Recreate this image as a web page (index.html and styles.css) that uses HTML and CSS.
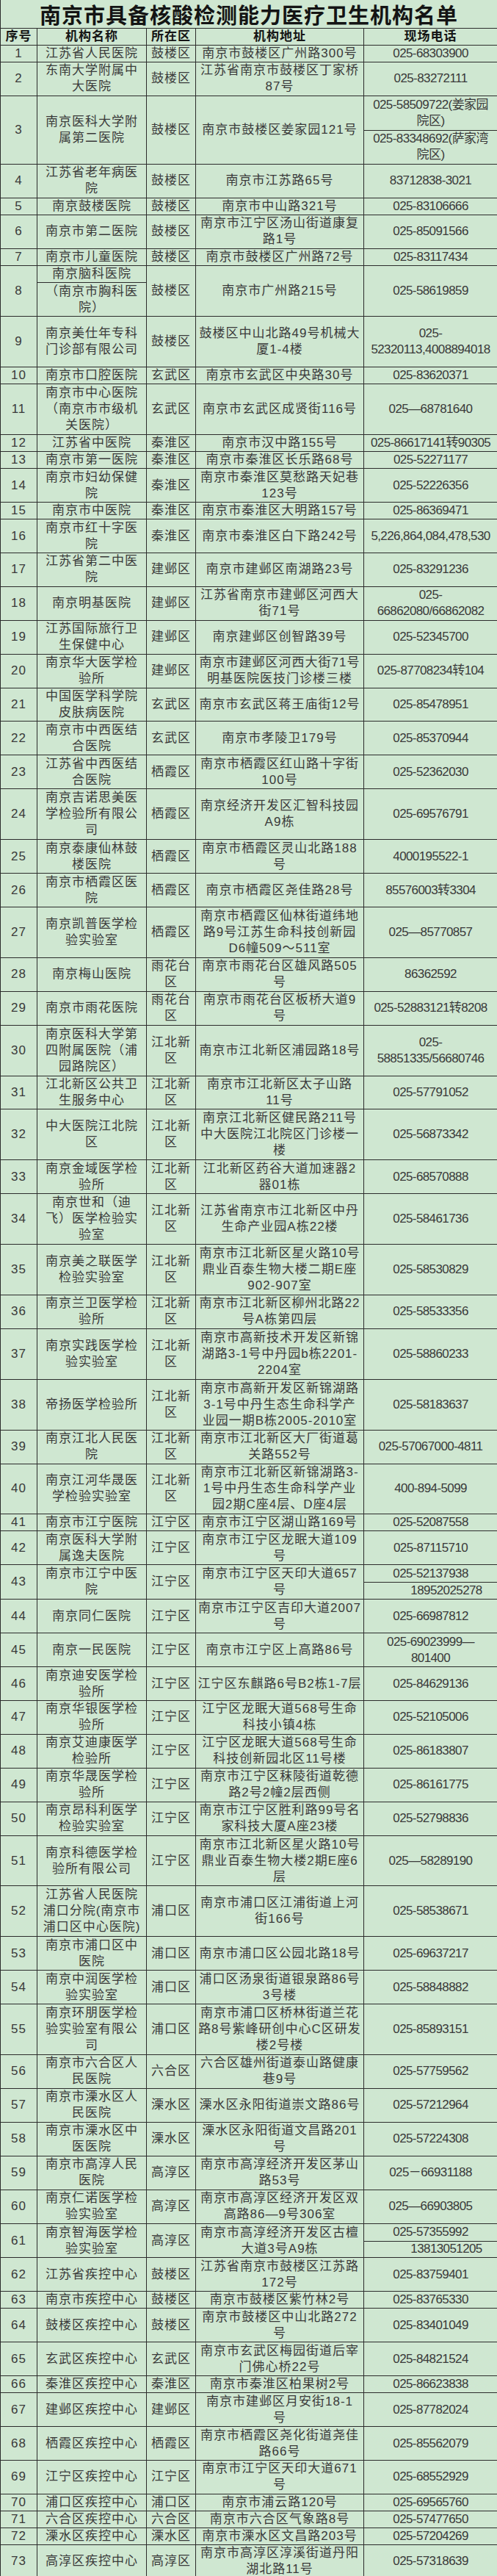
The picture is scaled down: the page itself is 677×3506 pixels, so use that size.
FILE: index.html
```html
<!DOCTYPE html>
<html lang="zh-CN">
<head>
<meta charset="utf-8">
<title>南京市具备核酸检测能力医疗卫生机构名单</title>
<link rel="stylesheet" href="styles.css">
</head>
<body>
<table class="sheet">
<colgroup><col class="c-no"><col class="c-name"><col class="c-area"><col class="c-addr"><col class="c-tel"></colgroup>
<thead>
<tr class="title"><th colspan="5">南京市具备核酸检测能力医疗卫生机构名单</th></tr>
<tr class="head u1"><th>序号</th><th>机构名称</th><th>所在区</th><th>机构地址</th><th>现场电话</th></tr>
</thead>
<tbody>
<tr class="u1"><td>1</td><td>江苏省人民医院</td><td>鼓楼区</td><td>南京市鼓楼区广州路300号</td><td class="tel">025-68303900</td></tr>
<tr class="u2"><td>2</td><td>东南大学附属中<br>大医院</td><td>鼓楼区</td><td>江苏省南京市鼓楼区丁家桥<br>87号</td><td class="tel">025-83272111</td></tr>
<tr class="u4"><td>3</td><td>南京医科大学附<br>属第二医院</td><td>鼓楼区</td><td>南京市鼓楼区姜家园121号</td><td class="tel split"><div class="part p2">025-58509722(姜家园<br>院区)</div><div class="part p2 lower">025-83348692(萨家湾<br>院区)</div></td></tr>
<tr class="u2"><td>4</td><td>江苏省老年病医<br>院</td><td>鼓楼区</td><td>南京市江苏路65号</td><td class="tel">83712838-3021</td></tr>
<tr class="u1"><td>5</td><td>南京鼓楼医院</td><td>鼓楼区</td><td>南京市中山路321号</td><td class="tel">025-83106666</td></tr>
<tr class="u2"><td>6</td><td>南京市第二医院</td><td>鼓楼区</td><td>南京市江宁区汤山街道康复<br>路1号</td><td class="tel">025-85091566</td></tr>
<tr class="u1"><td>7</td><td>南京市儿童医院</td><td>鼓楼区</td><td>南京市鼓楼区广州路72号</td><td class="tel">025-83117434</td></tr>
<tr class="u3"><td>8</td><td class="split"><div class="part p1">南京脑科医院</div><div class="part p2 lower">（南京市胸科医<br>院）</div></td><td>鼓楼区</td><td>南京市广州路215号</td><td class="tel">025-58619859</td></tr>
<tr class="u3"><td>9</td><td>南京美仕年专科<br>门诊部有限公司</td><td>鼓楼区</td><td>鼓楼区中山北路49号机械大<br>厦1-4楼</td><td class="tel">025-<br>52320113,4008894018</td></tr>
<tr class="u1"><td>10</td><td>南京市口腔医院</td><td>玄武区</td><td>南京市玄武区中央路30号</td><td class="tel">025-83620371</td></tr>
<tr class="u3"><td>11</td><td>南京市中心医院<br>（南京市市级机<br>关医院）</td><td>玄武区</td><td>南京市玄武区成贤街116号</td><td class="tel">025—68781640</td></tr>
<tr class="u1"><td>12</td><td>江苏省中医院</td><td>秦淮区</td><td>南京市汉中路155号</td><td class="tel">025-86617141转90305</td></tr>
<tr class="u1"><td>13</td><td>南京市第一医院</td><td>秦淮区</td><td>南京市秦淮区长乐路68号</td><td class="tel">025-52271177</td></tr>
<tr class="u2"><td>14</td><td>南京市妇幼保健<br>院</td><td>秦淮区</td><td>南京市秦淮区莫愁路天妃巷<br>123号</td><td class="tel">025-52226356</td></tr>
<tr class="u1"><td>15</td><td>南京市中医院</td><td>秦淮区</td><td>南京市秦淮区大明路157号</td><td class="tel">025-86369471</td></tr>
<tr class="u2"><td>16</td><td>南京市红十字医<br>院</td><td>秦淮区</td><td>南京市秦淮区白下路242号</td><td class="tel">5,226,864,084,478,530</td></tr>
<tr class="u2"><td>17</td><td>江苏省第二中医<br>院</td><td>建邺区</td><td>南京市建邺区南湖路23号</td><td class="tel">025-83291236</td></tr>
<tr class="u2"><td>18</td><td>南京明基医院</td><td>建邺区</td><td>江苏省南京市建邺区河西大<br>街71号</td><td class="tel">025-<br>66862080/66862082</td></tr>
<tr class="u2"><td>19</td><td>江苏国际旅行卫<br>生保健中心</td><td>建邺区</td><td>南京建邺区创智路39号</td><td class="tel">025-52345700</td></tr>
<tr class="u2"><td>20</td><td>南京华大医学检<br>验所</td><td>建邺区</td><td>南京市建邺区河西大街71号<br>明基医院医技门诊楼三楼</td><td class="tel">025-87708234转104</td></tr>
<tr class="u2"><td>21</td><td>中国医学科学院<br>皮肤病医院</td><td>玄武区</td><td>南京市玄武区蒋王庙街12号</td><td class="tel">025-85478951</td></tr>
<tr class="u2"><td>22</td><td>南京市中西医结<br>合医院</td><td>玄武区</td><td>南京市孝陵卫179号</td><td class="tel">025-85370944</td></tr>
<tr class="u2"><td>23</td><td>江苏省中西医结<br>合医院</td><td>栖霞区</td><td>南京市栖霞区红山路十字街<br>100号</td><td class="tel">025-52362030</td></tr>
<tr class="u3"><td>24</td><td>南京吉诺思美医<br>学检验所有限公<br>司</td><td>栖霞区</td><td>南京经济开发区汇智科技园<br>A9栋</td><td class="tel">025-69576791</td></tr>
<tr class="u2"><td>25</td><td>南京泰康仙林鼓<br>楼医院</td><td>栖霞区</td><td>南京市栖霞区灵山北路188<br>号</td><td class="tel">4000195522-1</td></tr>
<tr class="u2"><td>26</td><td>南京市栖霞区医<br>院</td><td>栖霞区</td><td>南京市栖霞区尧佳路28号</td><td class="tel">85576003转3304</td></tr>
<tr class="u3"><td>27</td><td>南京凯普医学检<br>验实验室</td><td>栖霞区</td><td>南京市栖霞区仙林街道纬地<br>路9号江苏生命科技创新园<br>D6幢509～511室</td><td class="tel">025—85770857</td></tr>
<tr class="u2"><td>28</td><td>南京梅山医院</td><td>雨花台<br>区</td><td>南京市雨花台区雄风路505<br>号</td><td class="tel">86362592</td></tr>
<tr class="u2"><td>29</td><td>南京市雨花医院</td><td>雨花台<br>区</td><td>南京市雨花台区板桥大道9<br>号</td><td class="tel">025-52883121转8208</td></tr>
<tr class="u3"><td>30</td><td>南京医科大学第<br>四附属医院（浦<br>园路院区）</td><td>江北新<br>区</td><td>南京市江北新区浦园路18号</td><td class="tel">025-<br>58851335/56680746</td></tr>
<tr class="u2"><td>31</td><td>江北新区公共卫<br>生服务中心</td><td>江北新<br>区</td><td>南京市江北新区太子山路<br>11号</td><td class="tel">025-57791052</td></tr>
<tr class="u3"><td>32</td><td>中大医院江北院<br>区</td><td>江北新<br>区</td><td>南京江北新区健民路211号<br>中大医院江北院区门诊楼一<br>楼</td><td class="tel">025-56873342</td></tr>
<tr class="u2"><td>33</td><td>南京金域医学检<br>验所</td><td>江北新<br>区</td><td>江北新区药谷大道加速器2<br>器01栋</td><td class="tel">025-68570888</td></tr>
<tr class="u3"><td>34</td><td>南京世和（迪<br>飞）医学检验实<br>验室</td><td>江北新<br>区</td><td>江苏省南京市江北新区中丹<br>生命产业园A栋22楼</td><td class="tel">025-58461736</td></tr>
<tr class="u3"><td>35</td><td>南京美之联医学<br>检验实验室</td><td>江北新<br>区</td><td>南京市江北新区星火路10号<br>鼎业百泰生物大楼二期E座<br>902-907室</td><td class="tel">025-58530829</td></tr>
<tr class="u2"><td>36</td><td>南京兰卫医学检<br>验所</td><td>江北新<br>区</td><td>南京市江北新区柳州北路22<br>号A栋第四层</td><td class="tel">025-58533356</td></tr>
<tr class="u3"><td>37</td><td>南京实践医学检<br>验实验室</td><td>江北新<br>区</td><td>南京市高新技术开发区新锦<br>湖路3-1号中丹园b栋2201-<br>2204室</td><td class="tel">025-58860233</td></tr>
<tr class="u3"><td>38</td><td>帝扬医学检验所</td><td>江北新<br>区</td><td>南京市高新开发区新锦湖路<br>3-1号中丹生态生命科学产<br>业园一期B栋2005-2010室</td><td class="tel">025-58183637</td></tr>
<tr class="u2"><td>39</td><td>南京江北人民医<br>院</td><td>江北新<br>区</td><td>南京市江北新区大厂街道葛<br>关路552号</td><td class="tel">025-57067000-4811</td></tr>
<tr class="u3"><td>40</td><td>南京江河华晟医<br>学检验实验室</td><td>江北新<br>区</td><td>南京市江北新区新锦湖路3-<br>1号中丹生态生命科学产业<br>园2期C座4层、D座4层</td><td class="tel">400-894-5099</td></tr>
<tr class="u1"><td>41</td><td>南京市江宁医院</td><td>江宁区</td><td>南京市江宁区湖山路169号</td><td class="tel">025-52087558</td></tr>
<tr class="u2"><td>42</td><td>南京医科大学附<br>属逸夫医院</td><td>江宁区</td><td>南京市江宁区龙眠大道109<br>号</td><td class="tel">025-87115710</td></tr>
<tr class="u2"><td>43</td><td>南京市江宁中医<br>院</td><td>江宁区</td><td>南京市江宁区天印大道657<br>号</td><td class="tel split"><div class="part p1">025-52137938</div><div class="part p1 lower shifted">18952025278</div></td></tr>
<tr class="u2"><td>44</td><td>南京同仁医院</td><td>江宁区</td><td>南京市江宁区吉印大道2007<br>号</td><td class="tel">025-66987812</td></tr>
<tr class="u2"><td>45</td><td>南京一民医院</td><td>江宁区</td><td>南京市江宁区上高路86号</td><td class="tel">025-69023999—<br>801400</td></tr>
<tr class="u2"><td>46</td><td>南京迪安医学检<br>验所</td><td>江宁区</td><td>江宁区东麒路6号B2栋1-7层</td><td class="tel">025-84629136</td></tr>
<tr class="u2"><td>47</td><td>南京华银医学检<br>验所</td><td>江宁区</td><td>江宁区龙眠大道568号生命<br>科技小镇4栋</td><td class="tel">025-52105006</td></tr>
<tr class="u2"><td>48</td><td>南京艾迪康医学<br>检验所</td><td>江宁区</td><td>江宁区龙眠大道568号生命<br>科技创新园北区11号楼</td><td class="tel">025-86183807</td></tr>
<tr class="u2"><td>49</td><td>南京华晟医学检<br>验所</td><td>江宁区</td><td>南京市江宁区秣陵街道乾德<br>路2号2幢2层西侧</td><td class="tel">025-86161775</td></tr>
<tr class="u2"><td>50</td><td>南京昂科利医学<br>检验实验室</td><td>江宁区</td><td>南京市江宁区胜利路99号名<br>家科技大厦A座23楼</td><td class="tel">025-52798836</td></tr>
<tr class="u3"><td>51</td><td>南京科德医学检<br>验所有限公司</td><td>江宁区</td><td>南京市江北新区星火路10号<br>鼎业百泰生物大楼2期E座6<br>层</td><td class="tel">025—58289190</td></tr>
<tr class="u3"><td>52</td><td>江苏省人民医院<br>浦口分院(南京市<br>浦口区中心医院)</td><td>浦口区</td><td>南京市浦口区江浦街道上河<br>街166号</td><td class="tel">025-58538671</td></tr>
<tr class="u2"><td>53</td><td>南京市浦口区中<br>医院</td><td>浦口区</td><td>南京市浦口区公园北路18号</td><td class="tel">025-69637217</td></tr>
<tr class="u2"><td>54</td><td>南京中润医学检<br>验实验室</td><td>浦口区</td><td>浦口区汤泉街道银泉路86号<br>3号楼</td><td class="tel">025-58848882</td></tr>
<tr class="u3"><td>55</td><td>南京环朋医学检<br>验实验室有限公<br>司</td><td>浦口区</td><td>南京市浦口区桥林街道兰花<br>路8号紫峰研创中心C区研发<br>楼2号楼</td><td class="tel">025-85893151</td></tr>
<tr class="u2"><td>56</td><td>南京市六合区人<br>民医院</td><td>六合区</td><td>六合区雄州街道泰山路健康<br>巷9号</td><td class="tel">025-57759562</td></tr>
<tr class="u2"><td>57</td><td>南京市溧水区人<br>民医院</td><td>溧水区</td><td>溧水区永阳街道崇文路86号</td><td class="tel">025-57212964</td></tr>
<tr class="u2"><td>58</td><td>南京市溧水区中<br>医医院</td><td>溧水区</td><td>溧水区永阳街道文昌路201<br>号</td><td class="tel">025-57224308</td></tr>
<tr class="u2"><td>59</td><td>南京市高淳人民<br>医院</td><td>高淳区</td><td>南京市高淳经济开发区茅山<br>路53号</td><td class="tel">025－66931188</td></tr>
<tr class="u2"><td>60</td><td>南京仁诺医学检<br>验实验室</td><td>高淳区</td><td>南京市高淳区经济开发区双<br>高路86—9号306室</td><td class="tel">025—66903805</td></tr>
<tr class="u2"><td>61</td><td>南京智海医学检<br>验实验室</td><td>高淳区</td><td>南京市高淳经济开发区古檀<br>大道3号A9栋</td><td class="tel split"><div class="part p1">025-57355992</div><div class="part p1 lower shifted">13813051205</div></td></tr>
<tr class="u2"><td>62</td><td>江苏省疾控中心</td><td>鼓楼区</td><td>江苏省南京市鼓楼区江苏路<br>172号</td><td class="tel">025-83759401</td></tr>
<tr class="u1"><td>63</td><td>南京市疾控中心</td><td>鼓楼区</td><td>南京市鼓楼区紫竹林2号</td><td class="tel">025-83765330</td></tr>
<tr class="u2"><td>64</td><td>鼓楼区疾控中心</td><td>鼓楼区</td><td>南京市鼓楼区中山北路272<br>号</td><td class="tel">025-83401049</td></tr>
<tr class="u2"><td>65</td><td>玄武区疾控中心</td><td>玄武区</td><td>南京市玄武区梅园街道后宰<br>门佛心桥22号</td><td class="tel">025-84821524</td></tr>
<tr class="u1"><td>66</td><td>秦淮区疾控中心</td><td>秦淮区</td><td>南京市秦淮区柏果树2号</td><td class="tel">025-86623838</td></tr>
<tr class="u2"><td>67</td><td>建邺区疾控中心</td><td>建邺区</td><td>南京市建邺区月安街18-1<br>号</td><td class="tel">025-87782024</td></tr>
<tr class="u2"><td>68</td><td>栖霞区疾控中心</td><td>栖霞区</td><td>南京市栖霞区尧化街道尧佳<br>路66号</td><td class="tel">025-85562079</td></tr>
<tr class="u2"><td>69</td><td>江宁区疾控中心</td><td>江宁区</td><td>南京市江宁区天印大道671<br>号</td><td class="tel">025-68552929</td></tr>
<tr class="u1"><td>70</td><td>浦口区疾控中心</td><td>浦口区</td><td>南京市浦云路120号</td><td class="tel">025-69565760</td></tr>
<tr class="u1"><td>71</td><td>六合区疾控中心</td><td>六合区</td><td>南京市六合区气象路8号</td><td class="tel">025-57477650</td></tr>
<tr class="u1"><td>72</td><td>溧水区疾控中心</td><td>溧水区</td><td>南京市溧水区文昌路203号</td><td class="tel">025-57204269</td></tr>
<tr class="u2"><td>73</td><td>高淳区疾控中心</td><td>高淳区</td><td>南京市高淳区淳溪街道丹阳<br>湖北路11号</td><td class="tel">025-57318639</td></tr>
</tbody>
</table>
</body>
</html>
```

FILE: styles.css
```css
html, body {
  margin: 0;
  padding: 0;
  background: #cfe7d1;
}

.sheet {
  width: 677px;
  border-collapse: collapse;
  table-layout: fixed;
  background: #cfe7d1;
  font-family: "Liberation Sans Narrow", "Liberation Sans", "Noto Sans CJK SC", sans-serif;
  font-size: 17px;
  letter-spacing: 1px;
  color: #3a3a3a;
}

.c-no { width: 50px; }
.c-name { width: 149px; }
.c-area { width: 67px; }
.c-addr { width: 229px; }
.c-tel { width: 182px; }

.sheet td,
.sheet th {
  border: 1px solid #2c2c2c;
  padding: 0 1px;
  text-align: center;
  vertical-align: middle;
  line-height: 22px;
  white-space: nowrap;
}

.title th {
  height: 38px;
  border-top: none;
  font-family: "Noto Sans CJK SC", sans-serif;
  font-size: 29px;
  font-weight: 700;
  letter-spacing: 1px;
  line-height: 36px;
  color: #141414;
}

.head th {
  font-weight: 700;
  color: #151515;
}

.sheet td.tel {
  letter-spacing: -0.6px;
}

.u1 { height: 22.96px; }
.u2 { height: 45.92px; }
.u3 { height: 68.88px; }
.u4 { height: 91.84px; }

.sheet td.split {
  padding: 0;
}

.part {
  box-sizing: border-box;
  display: flex;
  align-items: center;
  justify-content: center;
  padding: 0 1px;
}

.p1 { height: 22.96px; }
.p2 { height: 45.92px; }

.lower {
  border-top: 1px solid #2c2c2c;
}

.shifted {
  padding-left: 44px;
}
```
